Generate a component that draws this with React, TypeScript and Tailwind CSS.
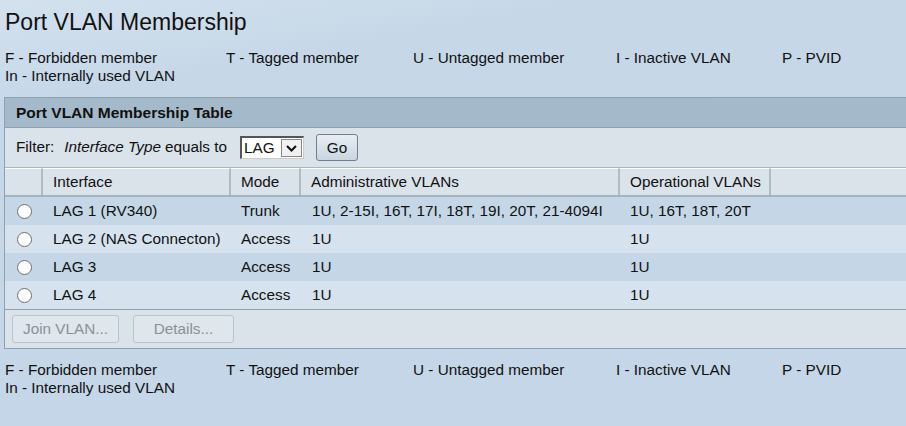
import React from "react";

const legend = [
  { text: "F - Forbidden member", w: "w-[221px]" },
  { text: "T - Tagged member", w: "w-[187px]" },
  { text: "U - Untagged member", w: "w-[203px]" },
  { text: "I - Inactive VLAN", w: "w-[166px]" },
  { text: "P - PVID", w: "" },
];

const rows = [
  { name: "LAG 1 (RV340)", mode: "Trunk", admin: "1U, 2-15I, 16T, 17I, 18T, 19I, 20T, 21-4094I", oper: "1U, 16T, 18T, 20T" },
  { name: "LAG 2 (NAS Connecton)", mode: "Access", admin: "1U", oper: "1U" },
  { name: "LAG 3", mode: "Access", admin: "1U", oper: "1U" },
  { name: "LAG 4", mode: "Access", admin: "1U", oper: "1U" },
];

function Legend() {
  return (
    <div className="pl-[5px] text-[15.3px] leading-[18px] text-[#111]">
      <div className="flex">
        {legend.map((l) => (
          <span key={l.text} className={l.w}>{l.text}</span>
        ))}
      </div>
      <div>In - Internally used VLAN</div>
    </div>
  );
}

const cols = "grid grid-cols-[38px_188px_70px_319px_151px_1fr]";

export default function App() {
  return (
    <div
      className="min-h-screen w-full overflow-hidden bg-[linear-gradient(170deg,#d3e1ee_0%,#c6d8e8_18%,#c4d6e7_100%)] text-[#111]"
      style={{ fontFamily: '"Liberation Sans", Arial, sans-serif' }}
    >
      {/* Title */}
      <h1 className="pl-[5px] pt-[9px] text-[23px] leading-[27px] font-normal">Port VLAN Membership</h1>

      <div className="mt-[13px]">
        <Legend />
      </div>

      {/* Table panel */}
      <div className="mt-[12px] ml-[4px] border-t border-l border-b border-[#8ea1af] w-[910px]">
        {/* Panel header */}
        <div className="h-[30px] bg-[#a4b9c9] border-b border-[#8ea1af] flex items-center pl-[11px] text-[15.5px] font-bold">
          Port VLAN Membership Table
        </div>

        {/* Filter row */}
        <div className="h-[40px] bg-[#dae2ea] flex items-center pl-[11px] text-[15.3px] border-b border-[#a6b6c2]">
          <span>Filter:</span>
          <span className="ml-[10px] italic">Interface Type</span>
          <span className="ml-[4px]">equals to</span>
          <div className="ml-[13px] h-[23px] w-[64px] flex items-stretch bg-white border-t-2 border-l-2 border-[#555] border-r border-b border-r-[#ccc] border-b-[#ccc]">
            <span className="pl-[2px] leading-[20px]">LAG</span>
            <span className="ml-auto mr-[1px] my-[1px] w-[21px] flex items-center justify-center bg-[#f0f0f0] border border-[#888]">
              <svg width="11" height="7" viewBox="0 0 11 7">
                <path d="M1 1 L5.5 5.5 L10 1" fill="none" stroke="#111" strokeWidth="2" />
              </svg>
            </span>
          </div>
          <button className="ml-[12px] h-[27px] w-[42px] rounded-[3px] border border-[#6f7f8c] bg-[linear-gradient(#e8eef3,#c9d5df)] leading-[25px]">
            Go
          </button>
        </div>

        {/* Column header */}
        <div className={`${cols} h-[29px] bg-[#dae2ea] border-b-2 border-[#a4b5c1] text-[15.3px]`}>
          {["", "Interface", "Mode", "Administrative VLANs", "Operational VLANs", ""].map((h, i) => (
            <div
              key={i}
              className={`flex items-center pl-[10px] border-t border-white ${i < 5 ? "border-r-2 border-r-[#aebcc7]" : ""}`}
            >
              {h}
            </div>
          ))}
        </div>

        {/* Rows */}
        {rows.map((r, i) => (
          <div
            key={r.name}
            className={`${cols} h-[28px] items-center text-[15.3px] ${i % 2 === 0 ? "bg-[#c5d7e7]" : "bg-[#d6e3ef]"}`}
          >
            <div className="flex justify-center pl-[1px]">
              <span className="w-[15px] h-[15px] rounded-full bg-white border border-[#6d6d6d]" />
            </div>
            <div className="pl-[10px]">{r.name}</div>
            <div className="pl-[10px]">{r.mode}</div>
            <div className="pl-[11px] whitespace-nowrap">{r.admin}</div>
            <div className="pl-[10px] whitespace-nowrap">{r.oper}</div>
            <div />
          </div>
        ))}

        {/* Action bar */}
        <div className="h-[39px] bg-[#dae2ea] border-t border-[#8ea1af] flex items-center pl-[7px] gap-[14px] text-[15.3px]">
          <button className="h-[28px] w-[107px] rounded-[3px] border border-[#b9c4cc] bg-[#dfe6ec] text-[#8a9299]">
            Join VLAN...
          </button>
          <button className="h-[28px] w-[101px] rounded-[3px] border border-[#b9c4cc] bg-[#dfe6ec] text-[#8a9299]">
            Details...
          </button>
        </div>
      </div>

      <div className="mt-[12px]">
        <Legend />
      </div>
    </div>
  );
}
